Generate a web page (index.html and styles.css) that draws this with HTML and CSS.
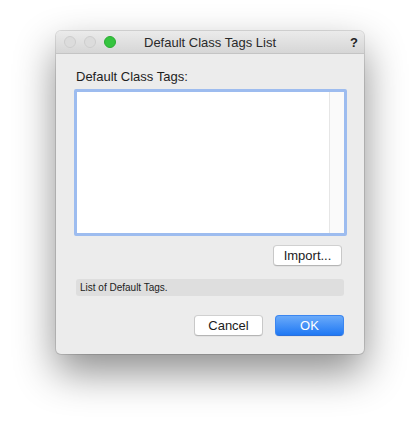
FILE: index.html
```html
<!DOCTYPE html>
<html>
<head>
<meta charset="utf-8">
<link rel="stylesheet" href="styles.css">
</head>
<body>
<div class="window">
  <div class="titlebar">
    <div class="lights">
      <span class="light off"></span>
      <span class="light off"></span>
      <span class="light green"></span>
    </div>
    <div class="title">Default Class Tags List</div>
    <div class="help">?</div>
  </div>
  <div class="content">
    <div class="label">Default Class Tags:</div>
    <div class="listbox">
      <div class="listarea"></div>
      <div class="scrolltrack"></div>
    </div>
    <div class="row right import-row">
      <button class="btn import">Import...</button>
    </div>
    <div class="status">List of Default Tags.</div>
    <div class="row right actions">
      <button class="btn cancel">Cancel</button>
      <button class="btn ok">OK</button>
    </div>
  </div>
</div>
</body>
</html>
```
FILE: styles.css
```css
html, body {
  margin: 0;
  padding: 0;
  background: #ffffff;
}
html {
  height: 100%;
}
body {
  min-height: 100%;
  box-sizing: border-box;
  padding: 31px 0 0 56px;
  font-family: "Liberation Sans", Arial, sans-serif;
  color: #222;
}
.window {
  width: 308px;
  height: 323px;
  background: #ececec;
  border-radius: 5px;
  box-shadow: 0 0 0 1px rgba(0,0,0,0.12), 0 18px 40px rgba(0,0,0,0.45);
  overflow: hidden;
  display: flex;
  flex-direction: column;
}
.titlebar {
  height: 22px;
  flex: none;
  background: linear-gradient(#ebebeb, #d6d6d6);
  border-bottom: 1px solid #c4c4c4;
  display: grid;
  grid-template-columns: 1fr auto 1fr;
  align-items: center;
}
.lights {
  display: flex;
  gap: 8px;
  padding-left: 8px;
}
.light {
  width: 12px;
  height: 12px;
  border-radius: 50%;
  box-sizing: border-box;
}
.light.off {
  background: #dcdcdc;
  border: 1px solid #cdcdcd;
}
.light.green {
  background: #35c43f;
  border: 1px solid #2aac32;
}
.title {
  text-align: center;
  font-size: 13px;
  color: #2a2a2a;
}
.help {
  justify-self: end;
  width: 16px;
  font-weight: bold;
  font-size: 13px;
  color: #222;
  text-align: center;
  margin-right: 2px;
}
.content {
  padding: 15px 17px 0 18px;
  display: flex;
  flex-direction: column;
}
.label {
  font-size: 13px;
  line-height: 16px;
  padding-left: 2px;
  color: #1e1e1e;
}
.listbox {
  margin-top: 4px;
  height: 141px;
  border: 3px solid #9dbcef;
  border-radius: 2px;
  background: #fff;
  display: flex;
}
.listarea {
  flex: 1;
}
.scrolltrack {
  width: 14px;
  border-left: 1px solid #e6e6e6;
  background: #fafafa;
}
.row {
  display: flex;
  gap: 12px;
}
.right {
  justify-content: flex-end;
}
.btn {
  font-family: "Liberation Sans", Arial, sans-serif;
  font-size: 13px;
  height: 21px;
  width: 69px;
  padding: 0;
  border-radius: 4px;
  border: 1px solid #c8c8c8;
  border-top-color: #d0d0d0;
  border-bottom-color: #b5b5b5;
  background: #fff;
  color: #1a1a1a;
  box-shadow: 0 0.5px 0.5px rgba(0,0,0,0.08);
}
.import-row {
  margin-top: 9px;
  padding-right: 5px;
}
.status {
  margin: 13px 3px 0 2px;
  height: 17px;
  line-height: 17px;
  background: #dedede;
  border-radius: 3px;
  font-size: 10px;
  padding-left: 4px;
  color: #222;
}
.actions {
  margin-top: 19px;
  padding-right: 3px;
}
.btn.ok {
  background: linear-gradient(#6aaaf9, #1f78f4);
  border-color: #3b86f0;
  border-bottom-color: #2a6fdb;
  color: #fff;
}
```
